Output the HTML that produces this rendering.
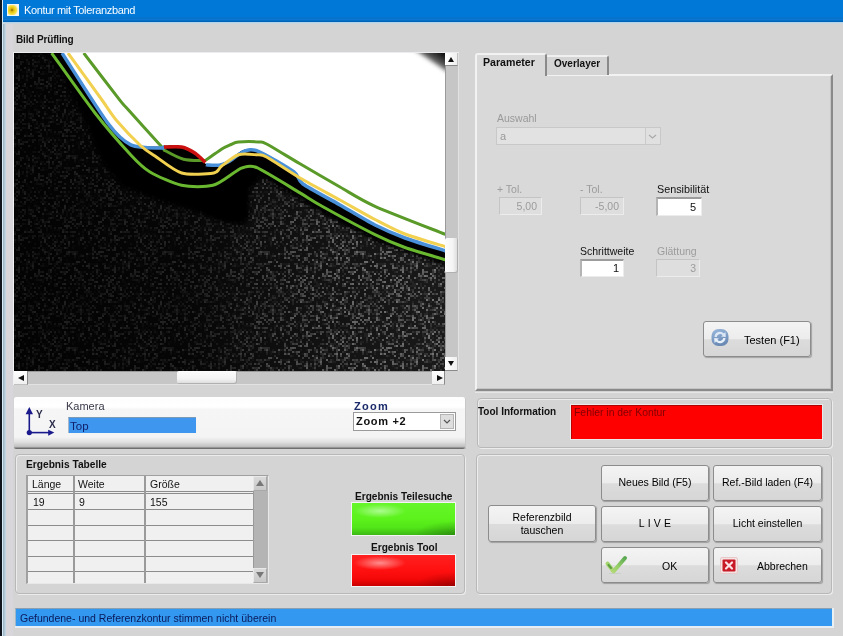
<!DOCTYPE html>
<html><head><meta charset="utf-8">
<style>
*{margin:0;padding:0;box-sizing:border-box;-webkit-font-smoothing:antialiased}
html,body{width:843px;height:636px;overflow:hidden;}body{will-change:transform;background:#d4d4d4;font-family:"Liberation Sans",sans-serif;color:#000}
.a{position:absolute}
.t{position:absolute;white-space:nowrap;line-height:1}
.btn{position:absolute;border:1px solid #8c8c8c;border-radius:3px;background:linear-gradient(#f4f4f4 0%,#ececec 50%,#dcdcdc 52%,#d6d6d6 100%);box-shadow:1px 1px 1px rgba(0,0,0,.25)}
.btn span{position:absolute;white-space:nowrap;line-height:1;font-size:10.5px}
.fld{position:absolute;border:1px solid;border-color:#a8a8a8 #f4f4f4 #f4f4f4 #a8a8a8;background:#e2e2e2}
.grp{position:absolute;border:1px solid #b8b8b8;border-radius:4px;box-shadow:inset 1px 1px 0 #ececec,1px 1px 0 #ececec}
</style></head><body>
<!-- window frame -->
<div class="a" style="left:0;top:0;width:2px;height:636px;background:#10141c"></div>
<div class="a" style="left:2px;top:0;width:1px;height:636px;background:#d8ecf8"></div>
<div class="a" style="left:3px;top:0;width:3px;height:636px;background:linear-gradient(90deg,#9ab0c0,#c8dce8)"></div>
<div class="a" style="left:6px;top:23px;width:7px;height:613px;background:#d8d6da"></div>
<!-- title bar -->
<div class="a" style="left:3px;top:0;width:840px;height:22px;background:linear-gradient(#0078d7 0,#0078d7 17px,#0a6fc4 18px,#0a7ad6 20px,#0062b4 21px,#0062b4 22px)"></div>
<div class="a" style="left:3px;top:22px;width:840px;height:1px;background:#b4d4ee"></div>
<div class="a" style="left:3px;top:23px;width:840px;height:1px;background:#cad6de"></div>
<div class="a" style="left:7px;top:4px;width:12px;height:12px;background:#f4f6f0"></div>
<div class="a" style="left:8px;top:5px;width:10px;height:10px;background:radial-gradient(ellipse 6px 6px at 4px 5px,#806000 0,#d8b010 25%,#f0d820 55%,#f4e060 80%,rgba(250,240,200,0) 100%)"></div>
<div class="t" style="left:24px;top:5px;font-size:11px;letter-spacing:-0.35px;color:#fafdff">Kontur mit Toleranzband</div>

<div class="t" style="left:16px;top:35px;font-size:10px;font-weight:bold;letter-spacing:-0.15px;color:#111">Bild Prüfling</div>

<!-- IMAGE -->
<div class="a" style="left:13px;top:52px;width:1px;height:333px;background:#f2f2f6"></div>
<div class="a" style="left:13px;top:52px;width:446px;height:1px;background:#ececf0"></div>
<div id="img" class="a" style="left:14px;top:53px;width:431px;height:318px;overflow:hidden;background:#fff"><svg width="431" height="318" viewBox="0 0 431 318" style="position:absolute;left:0;top:0">
<defs>
<linearGradient id="dg" x1="0" y1="0" x2="1" y2="0"><stop offset="0" stop-color="#030303"/><stop offset="0.4" stop-color="#060606"/><stop offset="0.65" stop-color="#101010"/><stop offset="1" stop-color="#1a1a1a"/></linearGradient>
<linearGradient id="tr" x1="1" y1="0" x2="0" y2="1"><stop offset="0" stop-color="#000"/><stop offset="0.3" stop-color="#111"/><stop offset="0.55" stop-color="#777"/><stop offset="0.75" stop-color="#fff" stop-opacity="0"/></linearGradient>
<filter id="bl" x="-20%" y="-20%" width="140%" height="140%"><feGaussianBlur stdDeviation="5"/></filter>
<clipPath id="dc"><path d="M-1,-1 L46,-1 L48,0 L47.0,-1.0 C53.1,8.3 83.5,56.7 92.7,69.0 C101.9,81.3 109.2,87.8 116.3,91.1 C123.4,94.4 141.6,93.7 146.0,94.0 C150.4,94.3 146.3,93.1 149.0,93.0 C151.7,92.9 162.5,92.2 166.6,93.0 C170.7,93.8 176.6,96.9 179.8,99.0 C183.0,101.1 188.8,107.0 190.3,108.5 C191.8,110.0 190.6,110.2 191.0,110.5 C191.4,110.8 191.1,110.9 193.0,111.0 C194.9,111.1 202.7,111.5 205.5,111.0 C208.3,110.5 210.9,109.4 214.0,107.6 C217.1,105.8 225.1,98.7 229.0,97.3 C232.9,95.9 236.7,94.5 243.4,97.3 C250.1,100.1 273.1,113.6 279.0,118.0 C284.9,122.4 281.9,125.6 288.0,130.0 C294.1,134.4 315.4,145.4 325.0,150.9 C334.6,156.4 351.3,166.6 360.0,171.0 C368.7,175.4 380.5,180.5 390.0,184.0 C399.5,187.5 425.5,195.3 431.0,197.0 L432,319 L-1,319 Z"/></clipPath>
<pattern id="nz" width="96" height="96" patternUnits="userSpaceOnUse"><path d="M8 0h2v2h-2zM32 0h2v2h-2zM36 0h2v2h-2zM58 0h2v2h-2zM60 0h2v2h-2zM64 0h2v2h-2zM78 0h2v2h-2zM90 0h2v2h-2zM92 0h2v2h-2zM22 2h2v2h-2zM30 2h2v2h-2zM32 2h2v2h-2zM48 2h2v2h-2zM84 2h2v2h-2zM16 4h2v2h-2zM26 4h2v2h-2zM34 4h2v2h-2zM54 4h2v2h-2zM80 4h2v2h-2zM20 6h2v2h-2zM24 6h2v2h-2zM28 6h2v2h-2zM44 6h2v2h-2zM4 8h2v2h-2zM66 8h2v2h-2zM76 8h2v2h-2zM94 8h2v2h-2zM12 10h2v2h-2zM22 10h2v2h-2zM24 10h2v2h-2zM42 10h2v2h-2zM48 10h2v2h-2zM54 10h2v2h-2zM64 10h2v2h-2zM72 10h2v2h-2zM82 10h2v2h-2zM0 12h2v2h-2zM64 12h2v2h-2zM72 12h2v2h-2zM12 14h2v2h-2zM28 14h2v2h-2zM44 14h2v2h-2zM52 14h2v2h-2zM86 14h2v2h-2zM22 16h2v2h-2zM66 16h2v2h-2zM8 18h2v2h-2zM10 18h2v2h-2zM30 18h2v2h-2zM38 18h2v2h-2zM46 18h2v2h-2zM56 18h2v2h-2zM76 18h2v2h-2zM78 18h2v2h-2zM80 18h2v2h-2zM94 18h2v2h-2zM30 20h2v2h-2zM32 20h2v2h-2zM44 20h2v2h-2zM94 20h2v2h-2zM2 22h2v2h-2zM62 22h2v2h-2zM0 24h2v2h-2zM6 24h2v2h-2zM18 24h2v2h-2zM44 24h2v2h-2zM80 24h2v2h-2zM90 24h2v2h-2zM10 26h2v2h-2zM40 26h2v2h-2zM60 26h2v2h-2zM68 26h2v2h-2zM74 26h2v2h-2zM84 26h2v2h-2zM92 26h2v2h-2zM4 28h2v2h-2zM6 28h2v2h-2zM12 28h2v2h-2zM22 28h2v2h-2zM18 32h2v2h-2zM34 32h2v2h-2zM68 32h2v2h-2zM90 32h2v2h-2zM20 34h2v2h-2zM36 34h2v2h-2zM52 34h2v2h-2zM90 34h2v2h-2zM12 36h2v2h-2zM14 36h2v2h-2zM26 36h2v2h-2zM46 36h2v2h-2zM54 36h2v2h-2zM56 36h2v2h-2zM74 36h2v2h-2zM14 38h2v2h-2zM16 38h2v2h-2zM22 38h2v2h-2zM62 38h2v2h-2zM2 40h2v2h-2zM12 40h2v2h-2zM14 40h2v2h-2zM16 40h2v2h-2zM22 40h2v2h-2zM34 40h2v2h-2zM64 40h2v2h-2zM58 42h2v2h-2zM60 42h2v2h-2zM66 42h2v2h-2zM68 42h2v2h-2zM76 42h2v2h-2zM86 42h2v2h-2zM8 44h2v2h-2zM12 44h2v2h-2zM24 44h2v2h-2zM50 44h2v2h-2zM52 44h2v2h-2zM56 44h2v2h-2zM70 44h2v2h-2zM82 44h2v2h-2zM84 44h2v2h-2zM88 44h2v2h-2zM6 46h2v2h-2zM18 46h2v2h-2zM26 46h2v2h-2zM30 46h2v2h-2zM80 46h2v2h-2zM86 46h2v2h-2zM90 46h2v2h-2zM24 48h2v2h-2zM44 48h2v2h-2zM50 48h2v2h-2zM74 48h2v2h-2zM82 48h2v2h-2zM16 50h2v2h-2zM20 50h2v2h-2zM54 50h2v2h-2zM68 50h2v2h-2zM22 52h2v2h-2zM32 52h2v2h-2zM64 52h2v2h-2zM70 52h2v2h-2zM90 52h2v2h-2zM20 54h2v2h-2zM50 54h2v2h-2zM68 54h2v2h-2zM74 54h2v2h-2zM84 54h2v2h-2zM8 56h2v2h-2zM14 56h2v2h-2zM24 56h2v2h-2zM32 56h2v2h-2zM54 56h2v2h-2zM66 56h2v2h-2zM68 56h2v2h-2zM74 56h2v2h-2zM26 58h2v2h-2zM42 58h2v2h-2zM46 58h2v2h-2zM54 58h2v2h-2zM64 58h2v2h-2zM2 60h2v2h-2zM24 60h2v2h-2zM56 60h2v2h-2zM72 60h2v2h-2zM80 60h2v2h-2zM4 62h2v2h-2zM14 62h2v2h-2zM28 62h2v2h-2zM30 62h2v2h-2zM34 62h2v2h-2zM54 62h2v2h-2zM64 62h2v2h-2zM74 62h2v2h-2zM6 64h2v2h-2zM8 64h2v2h-2zM18 64h2v2h-2zM30 64h2v2h-2zM38 64h2v2h-2zM40 64h2v2h-2zM42 64h2v2h-2zM46 64h2v2h-2zM76 64h2v2h-2zM88 64h2v2h-2zM94 64h2v2h-2zM6 66h2v2h-2zM16 66h2v2h-2zM28 66h2v2h-2zM72 66h2v2h-2zM14 68h2v2h-2zM26 68h2v2h-2zM28 68h2v2h-2zM40 68h2v2h-2zM54 68h2v2h-2zM60 68h2v2h-2zM72 68h2v2h-2zM86 68h2v2h-2zM4 70h2v2h-2zM20 70h2v2h-2zM32 70h2v2h-2zM56 70h2v2h-2zM66 70h2v2h-2zM78 70h2v2h-2zM94 70h2v2h-2zM4 72h2v2h-2zM20 72h2v2h-2zM48 72h2v2h-2zM60 72h2v2h-2zM70 72h2v2h-2zM72 72h2v2h-2zM12 74h2v2h-2zM28 74h2v2h-2zM78 74h2v2h-2zM88 74h2v2h-2zM2 76h2v2h-2zM82 76h2v2h-2zM92 76h2v2h-2zM12 78h2v2h-2zM20 78h2v2h-2zM26 78h2v2h-2zM70 78h2v2h-2zM10 80h2v2h-2zM12 80h2v2h-2zM38 80h2v2h-2zM40 80h2v2h-2zM42 80h2v2h-2zM68 80h2v2h-2zM74 80h2v2h-2zM90 80h2v2h-2zM32 82h2v2h-2zM36 82h2v2h-2zM54 82h2v2h-2zM64 82h2v2h-2zM72 82h2v2h-2zM76 82h2v2h-2zM90 82h2v2h-2zM94 82h2v2h-2zM8 84h2v2h-2zM26 84h2v2h-2zM30 84h2v2h-2zM32 84h2v2h-2zM42 84h2v2h-2zM44 84h2v2h-2zM58 84h2v2h-2zM68 84h2v2h-2zM16 86h2v2h-2zM46 86h2v2h-2zM52 86h2v2h-2zM60 86h2v2h-2zM74 86h2v2h-2zM94 86h2v2h-2zM0 88h2v2h-2zM24 88h2v2h-2zM32 88h2v2h-2zM46 88h2v2h-2zM54 88h2v2h-2zM62 88h2v2h-2zM64 88h2v2h-2zM74 88h2v2h-2zM80 88h2v2h-2zM24 90h2v2h-2zM26 90h2v2h-2zM32 90h2v2h-2zM50 90h2v2h-2zM58 90h2v2h-2zM62 90h2v2h-2zM64 90h2v2h-2zM68 90h2v2h-2zM84 90h2v2h-2zM88 90h2v2h-2zM16 92h2v2h-2zM28 92h2v2h-2zM34 92h2v2h-2zM52 92h2v2h-2zM88 92h2v2h-2zM92 92h2v2h-2zM70 94h2v2h-2zM76 94h2v2h-2zM86 94h2v2h-2z" fill="#fff" fill-opacity="0.056"/>
<path d="M4 0h2v2h-2zM72 0h2v2h-2zM86 0h2v2h-2zM0 2h2v2h-2zM18 2h2v2h-2zM28 2h2v2h-2zM42 2h2v2h-2zM46 2h2v2h-2zM58 2h2v2h-2zM30 4h2v2h-2zM36 4h2v2h-2zM34 6h2v2h-2zM78 6h2v2h-2zM12 8h2v2h-2zM18 8h2v2h-2zM44 8h2v2h-2zM62 8h2v2h-2zM74 8h2v2h-2zM40 10h2v2h-2zM78 10h2v2h-2zM88 10h2v2h-2zM18 12h2v2h-2zM26 12h2v2h-2zM28 12h2v2h-2zM60 12h2v2h-2zM14 14h2v2h-2zM20 14h2v2h-2zM84 14h2v2h-2zM12 16h2v2h-2zM20 16h2v2h-2zM46 16h2v2h-2zM14 18h2v2h-2zM16 18h2v2h-2zM28 18h2v2h-2zM40 18h2v2h-2zM60 18h2v2h-2zM62 18h2v2h-2zM82 18h2v2h-2zM0 20h2v2h-2zM12 20h2v2h-2zM26 20h2v2h-2zM52 20h2v2h-2zM54 20h2v2h-2zM56 20h2v2h-2zM14 22h2v2h-2zM50 22h2v2h-2zM8 24h2v2h-2zM12 24h2v2h-2zM40 24h2v2h-2zM34 26h2v2h-2zM62 26h2v2h-2zM66 26h2v2h-2zM94 26h2v2h-2zM34 28h2v2h-2zM42 28h2v2h-2zM48 28h2v2h-2zM60 28h2v2h-2zM0 30h2v2h-2zM24 30h2v2h-2zM40 30h2v2h-2zM22 32h2v2h-2zM12 34h2v2h-2zM22 34h2v2h-2zM28 34h2v2h-2zM66 34h2v2h-2zM28 36h2v2h-2zM36 36h2v2h-2zM62 36h2v2h-2zM88 36h2v2h-2zM92 38h2v2h-2zM26 40h2v2h-2zM68 40h2v2h-2zM88 40h2v2h-2zM48 42h2v2h-2zM14 44h2v2h-2zM36 44h2v2h-2zM94 44h2v2h-2zM46 46h2v2h-2zM72 46h2v2h-2zM76 46h2v2h-2zM26 48h2v2h-2zM28 48h2v2h-2zM36 48h2v2h-2zM42 48h2v2h-2zM72 48h2v2h-2zM76 48h2v2h-2zM42 50h2v2h-2zM66 50h2v2h-2zM16 52h2v2h-2zM28 52h2v2h-2zM80 52h2v2h-2zM8 54h2v2h-2zM30 54h2v2h-2zM44 54h2v2h-2zM64 54h2v2h-2zM92 54h2v2h-2zM2 56h2v2h-2zM6 56h2v2h-2zM22 56h2v2h-2zM36 56h2v2h-2zM42 56h2v2h-2zM70 56h2v2h-2zM86 56h2v2h-2zM14 58h2v2h-2zM86 58h2v2h-2zM4 60h2v2h-2zM32 60h2v2h-2zM60 60h2v2h-2zM70 60h2v2h-2zM16 62h2v2h-2zM36 62h2v2h-2zM52 62h2v2h-2zM92 62h2v2h-2zM14 64h2v2h-2zM32 64h2v2h-2zM44 64h2v2h-2zM48 64h2v2h-2zM52 64h2v2h-2zM68 64h2v2h-2zM38 66h2v2h-2zM52 66h2v2h-2zM56 66h2v2h-2zM64 66h2v2h-2zM68 66h2v2h-2zM74 66h2v2h-2zM84 66h2v2h-2zM90 66h2v2h-2zM2 68h2v2h-2zM18 68h2v2h-2zM48 68h2v2h-2zM70 68h2v2h-2zM12 70h2v2h-2zM34 70h2v2h-2zM74 70h2v2h-2zM76 72h2v2h-2zM10 74h2v2h-2zM24 74h2v2h-2zM48 74h2v2h-2zM52 74h2v2h-2zM0 76h2v2h-2zM36 76h2v2h-2zM64 76h2v2h-2zM4 78h2v2h-2zM22 78h2v2h-2zM32 78h2v2h-2zM36 78h2v2h-2zM82 78h2v2h-2zM90 78h2v2h-2zM32 80h2v2h-2zM44 80h2v2h-2zM50 80h2v2h-2zM68 82h2v2h-2zM34 84h2v2h-2zM38 84h2v2h-2zM94 84h2v2h-2zM14 86h2v2h-2zM34 86h2v2h-2zM68 86h2v2h-2zM40 88h2v2h-2zM52 88h2v2h-2zM2 90h2v2h-2zM42 90h2v2h-2zM52 90h2v2h-2zM4 92h2v2h-2zM64 92h2v2h-2zM20 94h2v2h-2zM26 94h2v2h-2zM46 94h2v2h-2zM64 94h2v2h-2zM94 94h2v2h-2z" fill="#fff" fill-opacity="0.113"/>
<path d="M84 0h2v2h-2zM10 2h2v2h-2zM20 2h2v2h-2zM70 2h2v2h-2zM42 4h2v2h-2zM46 4h2v2h-2zM42 6h2v2h-2zM46 6h2v2h-2zM62 6h2v2h-2zM14 8h2v2h-2zM22 8h2v2h-2zM24 8h2v2h-2zM30 8h2v2h-2zM34 8h2v2h-2zM34 10h2v2h-2zM50 10h2v2h-2zM60 10h2v2h-2zM66 10h2v2h-2zM20 12h2v2h-2zM80 12h2v2h-2zM90 12h2v2h-2zM30 14h2v2h-2zM68 14h2v2h-2zM34 16h2v2h-2zM12 18h2v2h-2zM52 18h2v2h-2zM88 18h2v2h-2zM90 18h2v2h-2zM4 20h2v2h-2zM16 20h2v2h-2zM28 20h2v2h-2zM40 20h2v2h-2zM42 22h2v2h-2zM16 24h2v2h-2zM34 24h2v2h-2zM84 24h2v2h-2zM70 26h2v2h-2zM78 26h2v2h-2zM64 28h2v2h-2zM66 28h2v2h-2zM82 28h2v2h-2zM36 30h2v2h-2zM92 30h2v2h-2zM8 32h2v2h-2zM30 32h2v2h-2zM60 32h2v2h-2zM62 32h2v2h-2zM66 32h2v2h-2zM76 32h2v2h-2zM82 32h2v2h-2zM24 34h2v2h-2zM40 34h2v2h-2zM6 36h2v2h-2zM44 36h2v2h-2zM40 38h2v2h-2zM68 38h2v2h-2zM4 40h2v2h-2zM40 40h2v2h-2zM42 40h2v2h-2zM70 40h2v2h-2zM8 42h2v2h-2zM16 42h2v2h-2zM54 42h2v2h-2zM80 42h2v2h-2zM90 42h2v2h-2zM0 44h2v2h-2zM74 44h2v2h-2zM14 46h2v2h-2zM44 46h2v2h-2zM52 46h2v2h-2zM56 46h2v2h-2zM70 46h2v2h-2zM84 46h2v2h-2zM8 48h2v2h-2zM12 48h2v2h-2zM78 48h2v2h-2zM28 50h2v2h-2zM62 50h2v2h-2zM84 50h2v2h-2zM94 50h2v2h-2zM26 52h2v2h-2zM30 52h2v2h-2zM66 52h2v2h-2zM68 52h2v2h-2zM82 52h2v2h-2zM88 52h2v2h-2zM42 54h2v2h-2zM62 54h2v2h-2zM78 54h2v2h-2zM86 54h2v2h-2zM0 56h2v2h-2zM20 56h2v2h-2zM44 56h2v2h-2zM58 56h2v2h-2zM90 56h2v2h-2zM22 58h2v2h-2zM30 58h2v2h-2zM38 58h2v2h-2zM18 60h2v2h-2zM42 60h2v2h-2zM50 60h2v2h-2zM58 60h2v2h-2zM64 60h2v2h-2zM74 60h2v2h-2zM66 62h2v2h-2zM94 62h2v2h-2zM10 64h2v2h-2zM34 64h2v2h-2zM56 64h2v2h-2zM64 64h2v2h-2zM74 64h2v2h-2zM62 66h2v2h-2zM22 68h2v2h-2zM34 68h2v2h-2zM38 68h2v2h-2zM22 70h2v2h-2zM26 70h2v2h-2zM42 70h2v2h-2zM44 70h2v2h-2zM52 70h2v2h-2zM0 72h2v2h-2zM24 72h2v2h-2zM30 72h2v2h-2zM8 74h2v2h-2zM20 74h2v2h-2zM30 74h2v2h-2zM2 78h2v2h-2zM94 78h2v2h-2zM76 80h2v2h-2zM0 82h2v2h-2zM12 82h2v2h-2zM50 82h2v2h-2zM78 84h2v2h-2zM6 86h2v2h-2zM24 86h2v2h-2zM26 86h2v2h-2zM28 86h2v2h-2zM32 86h2v2h-2zM44 86h2v2h-2zM56 86h2v2h-2zM80 86h2v2h-2zM30 88h2v2h-2zM38 90h2v2h-2zM76 90h2v2h-2zM0 92h2v2h-2zM74 92h2v2h-2zM40 94h2v2h-2zM90 94h2v2h-2z" fill="#fff" fill-opacity="0.169"/>
<path d="M26 0h2v2h-2zM44 0h2v2h-2zM54 0h2v2h-2zM36 2h2v2h-2zM52 2h2v2h-2zM88 2h2v2h-2zM92 4h2v2h-2zM12 6h2v2h-2zM32 6h2v2h-2zM52 6h2v2h-2zM56 6h2v2h-2zM58 6h2v2h-2zM60 6h2v2h-2zM8 8h2v2h-2zM54 8h2v2h-2zM58 8h2v2h-2zM84 8h2v2h-2zM4 12h2v2h-2zM46 12h2v2h-2zM4 14h2v2h-2zM34 14h2v2h-2zM38 14h2v2h-2zM0 16h2v2h-2zM6 16h2v2h-2zM18 16h2v2h-2zM42 16h2v2h-2zM34 18h2v2h-2zM42 18h2v2h-2zM50 18h2v2h-2zM54 18h2v2h-2zM74 18h2v2h-2zM80 20h2v2h-2zM8 22h2v2h-2zM38 22h2v2h-2zM44 22h2v2h-2zM74 22h2v2h-2zM94 22h2v2h-2zM12 26h2v2h-2zM26 26h2v2h-2zM48 26h2v2h-2zM50 26h2v2h-2zM76 28h2v2h-2zM66 30h2v2h-2zM68 30h2v2h-2zM90 30h2v2h-2zM64 32h2v2h-2zM26 34h2v2h-2zM32 34h2v2h-2zM64 34h2v2h-2zM74 34h2v2h-2zM76 34h2v2h-2zM2 38h2v2h-2zM64 38h2v2h-2zM74 38h2v2h-2zM76 38h2v2h-2zM8 40h2v2h-2zM84 40h2v2h-2zM90 40h2v2h-2zM24 42h2v2h-2zM4 44h2v2h-2zM32 46h2v2h-2zM50 46h2v2h-2zM74 46h2v2h-2zM34 48h2v2h-2zM38 48h2v2h-2zM86 48h2v2h-2zM88 48h2v2h-2zM12 50h2v2h-2zM14 50h2v2h-2zM18 50h2v2h-2zM52 50h2v2h-2zM72 50h2v2h-2zM76 50h2v2h-2zM6 52h2v2h-2zM78 52h2v2h-2zM10 54h2v2h-2zM4 56h2v2h-2zM76 56h2v2h-2zM40 58h2v2h-2zM56 58h2v2h-2zM58 58h2v2h-2zM68 58h2v2h-2zM72 58h2v2h-2zM10 60h2v2h-2zM14 60h2v2h-2zM22 60h2v2h-2zM66 60h2v2h-2zM6 62h2v2h-2zM10 62h2v2h-2zM18 62h2v2h-2zM58 62h2v2h-2zM76 62h2v2h-2zM80 62h2v2h-2zM72 64h2v2h-2zM4 66h2v2h-2zM66 66h2v2h-2zM92 66h2v2h-2zM6 68h2v2h-2zM50 68h2v2h-2zM58 68h2v2h-2zM76 68h2v2h-2zM88 68h2v2h-2zM94 68h2v2h-2zM0 70h2v2h-2zM8 70h2v2h-2zM10 70h2v2h-2zM50 70h2v2h-2zM32 72h2v2h-2zM4 74h2v2h-2zM76 74h2v2h-2zM84 74h2v2h-2zM16 76h2v2h-2zM72 76h2v2h-2zM80 76h2v2h-2zM24 78h2v2h-2zM40 78h2v2h-2zM44 78h2v2h-2zM62 78h2v2h-2zM84 78h2v2h-2zM26 80h2v2h-2zM70 80h2v2h-2zM80 80h2v2h-2zM88 80h2v2h-2zM16 82h2v2h-2zM18 82h2v2h-2zM56 82h2v2h-2zM28 84h2v2h-2zM64 84h2v2h-2zM18 86h2v2h-2zM20 86h2v2h-2zM82 86h2v2h-2zM8 88h2v2h-2zM10 88h2v2h-2zM82 88h2v2h-2zM90 88h2v2h-2zM4 90h2v2h-2zM48 90h2v2h-2zM86 90h2v2h-2zM90 90h2v2h-2zM42 92h2v2h-2zM48 92h2v2h-2zM6 94h2v2h-2zM32 94h2v2h-2zM38 94h2v2h-2z" fill="#fff" fill-opacity="0.225"/>
<path d="M94 0h2v2h-2zM24 2h2v2h-2zM78 2h2v2h-2zM86 2h2v2h-2zM90 2h2v2h-2zM2 4h2v2h-2zM40 4h2v2h-2zM44 4h2v2h-2zM78 4h2v2h-2zM6 8h2v2h-2zM20 8h2v2h-2zM52 8h2v2h-2zM82 8h2v2h-2zM6 10h2v2h-2zM14 10h2v2h-2zM68 10h2v2h-2zM90 10h2v2h-2zM22 12h2v2h-2zM32 12h2v2h-2zM2 14h2v2h-2zM44 16h2v2h-2zM18 18h2v2h-2zM36 18h2v2h-2zM58 18h2v2h-2zM68 20h2v2h-2zM12 22h2v2h-2zM18 22h2v2h-2zM52 22h2v2h-2zM92 22h2v2h-2zM2 24h2v2h-2zM54 24h2v2h-2zM60 24h2v2h-2zM82 24h2v2h-2zM28 26h2v2h-2zM36 26h2v2h-2zM24 28h2v2h-2zM20 30h2v2h-2zM22 30h2v2h-2zM84 30h2v2h-2zM10 32h2v2h-2zM0 34h2v2h-2zM50 34h2v2h-2zM0 36h2v2h-2zM80 36h2v2h-2zM94 36h2v2h-2zM6 38h2v2h-2zM18 38h2v2h-2zM60 38h2v2h-2zM94 38h2v2h-2zM20 42h2v2h-2zM50 42h2v2h-2zM64 42h2v2h-2zM70 42h2v2h-2zM30 44h2v2h-2zM72 44h2v2h-2zM2 46h2v2h-2zM42 46h2v2h-2zM0 48h2v2h-2zM16 48h2v2h-2zM22 48h2v2h-2zM54 48h2v2h-2zM90 48h2v2h-2zM94 48h2v2h-2zM40 52h2v2h-2zM44 52h2v2h-2zM52 52h2v2h-2zM58 52h2v2h-2zM0 54h2v2h-2zM80 54h2v2h-2zM94 54h2v2h-2zM16 60h2v2h-2zM48 60h2v2h-2zM54 60h2v2h-2zM62 60h2v2h-2zM78 60h2v2h-2zM48 62h2v2h-2zM16 64h2v2h-2zM36 64h2v2h-2zM46 66h2v2h-2zM66 68h2v2h-2zM74 68h2v2h-2zM90 68h2v2h-2zM2 70h2v2h-2zM14 70h2v2h-2zM58 70h2v2h-2zM60 70h2v2h-2zM16 72h2v2h-2zM50 72h2v2h-2zM56 72h2v2h-2zM0 74h2v2h-2zM2 74h2v2h-2zM64 74h2v2h-2zM66 74h2v2h-2zM6 76h2v2h-2zM26 76h2v2h-2zM34 76h2v2h-2zM60 76h2v2h-2zM88 76h2v2h-2zM46 78h2v2h-2zM52 78h2v2h-2zM56 78h2v2h-2zM86 78h2v2h-2zM2 80h2v2h-2zM48 80h2v2h-2zM14 82h2v2h-2zM58 82h2v2h-2zM60 82h2v2h-2zM84 84h2v2h-2zM40 86h2v2h-2zM58 86h2v2h-2zM18 88h2v2h-2zM66 88h2v2h-2zM0 90h2v2h-2zM8 90h2v2h-2zM14 92h2v2h-2zM26 92h2v2h-2zM46 92h2v2h-2zM70 92h2v2h-2zM68 94h2v2h-2zM80 94h2v2h-2z" fill="#fff" fill-opacity="0.281"/>
<path d="M34 0h2v2h-2zM38 2h2v2h-2zM4 4h2v2h-2zM28 4h2v2h-2zM18 6h2v2h-2zM80 6h2v2h-2zM84 6h2v2h-2zM88 6h2v2h-2zM42 8h2v2h-2zM78 8h2v2h-2zM18 10h2v2h-2zM86 10h2v2h-2zM92 10h2v2h-2zM2 12h2v2h-2zM38 12h2v2h-2zM10 14h2v2h-2zM26 14h2v2h-2zM46 14h2v2h-2zM92 14h2v2h-2zM74 20h2v2h-2zM90 20h2v2h-2zM4 22h2v2h-2zM48 22h2v2h-2zM78 22h2v2h-2zM90 22h2v2h-2zM4 24h2v2h-2zM24 24h2v2h-2zM24 26h2v2h-2zM46 26h2v2h-2zM64 26h2v2h-2zM82 26h2v2h-2zM20 28h2v2h-2zM50 28h2v2h-2zM86 28h2v2h-2zM2 30h2v2h-2zM28 30h2v2h-2zM34 30h2v2h-2zM56 30h2v2h-2zM78 30h2v2h-2zM4 32h2v2h-2zM16 32h2v2h-2zM32 32h2v2h-2zM36 32h2v2h-2zM44 32h2v2h-2zM46 32h2v2h-2zM56 32h2v2h-2zM78 34h2v2h-2zM92 34h2v2h-2zM8 36h2v2h-2zM70 36h2v2h-2zM34 38h2v2h-2zM48 38h2v2h-2zM56 38h2v2h-2zM80 40h2v2h-2zM2 42h2v2h-2zM4 42h2v2h-2zM10 42h2v2h-2zM30 42h2v2h-2zM46 42h2v2h-2zM62 44h2v2h-2zM92 44h2v2h-2zM20 46h2v2h-2zM10 48h2v2h-2zM62 48h2v2h-2zM0 50h2v2h-2zM2 50h2v2h-2zM10 52h2v2h-2zM38 56h2v2h-2zM60 56h2v2h-2zM82 56h2v2h-2zM24 58h2v2h-2zM8 60h2v2h-2zM30 60h2v2h-2zM38 62h2v2h-2zM28 64h2v2h-2zM66 64h2v2h-2zM90 64h2v2h-2zM8 66h2v2h-2zM18 66h2v2h-2zM78 66h2v2h-2zM36 68h2v2h-2zM28 70h2v2h-2zM28 72h2v2h-2zM54 72h2v2h-2zM74 72h2v2h-2zM22 74h2v2h-2zM58 74h2v2h-2zM62 74h2v2h-2zM74 74h2v2h-2zM54 76h2v2h-2zM4 80h2v2h-2zM82 80h2v2h-2zM94 80h2v2h-2zM24 82h2v2h-2zM26 82h2v2h-2zM52 82h2v2h-2zM74 82h2v2h-2zM84 82h2v2h-2zM0 84h2v2h-2zM36 86h2v2h-2zM4 88h2v2h-2zM12 88h2v2h-2zM28 88h2v2h-2zM50 88h2v2h-2zM40 92h2v2h-2zM58 92h2v2h-2zM50 94h2v2h-2zM54 94h2v2h-2z" fill="#fff" fill-opacity="0.338"/>
<path d="M40 0h2v2h-2zM4 2h2v2h-2zM50 2h2v2h-2zM94 4h2v2h-2zM30 6h2v2h-2zM54 6h2v2h-2zM86 6h2v2h-2zM36 8h2v2h-2zM60 8h2v2h-2zM72 8h2v2h-2zM34 12h2v2h-2zM44 12h2v2h-2zM78 12h2v2h-2zM82 12h2v2h-2zM14 16h2v2h-2zM62 16h2v2h-2zM64 16h2v2h-2zM70 16h2v2h-2zM24 18h2v2h-2zM18 20h2v2h-2zM72 20h2v2h-2zM82 20h2v2h-2zM60 22h2v2h-2zM36 24h2v2h-2zM62 24h2v2h-2zM4 26h2v2h-2zM52 26h2v2h-2zM32 28h2v2h-2zM72 28h2v2h-2zM10 30h2v2h-2zM26 30h2v2h-2zM60 30h2v2h-2zM94 32h2v2h-2zM2 34h2v2h-2zM58 34h2v2h-2zM68 34h2v2h-2zM88 34h2v2h-2zM82 36h2v2h-2zM42 38h2v2h-2zM50 38h2v2h-2zM86 40h2v2h-2zM94 40h2v2h-2zM74 42h2v2h-2zM84 42h2v2h-2zM10 44h2v2h-2zM92 46h2v2h-2zM30 48h2v2h-2zM48 50h2v2h-2zM86 50h2v2h-2zM28 54h2v2h-2zM34 54h2v2h-2zM40 54h2v2h-2zM50 56h2v2h-2zM94 56h2v2h-2zM50 58h2v2h-2zM24 62h2v2h-2zM42 62h2v2h-2zM90 62h2v2h-2zM20 66h2v2h-2zM42 66h2v2h-2zM82 66h2v2h-2zM46 68h2v2h-2zM56 68h2v2h-2zM88 70h2v2h-2zM14 72h2v2h-2zM34 72h2v2h-2zM66 72h2v2h-2zM84 72h2v2h-2zM86 72h2v2h-2zM14 74h2v2h-2zM30 76h2v2h-2zM50 76h2v2h-2zM52 76h2v2h-2zM68 76h2v2h-2zM16 80h2v2h-2zM10 82h2v2h-2zM48 82h2v2h-2zM74 84h2v2h-2zM4 86h2v2h-2zM50 86h2v2h-2zM34 88h2v2h-2zM68 88h2v2h-2zM76 88h2v2h-2zM88 88h2v2h-2zM6 90h2v2h-2zM30 90h2v2h-2zM66 90h2v2h-2zM30 92h2v2h-2zM54 92h2v2h-2zM84 92h2v2h-2z" fill="#fff" fill-opacity="0.394"/></pattern>
<linearGradient id="mg" x1="0" y1="0" x2="1" y2="0"><stop offset="0" stop-color="#fff" stop-opacity="0.26"/><stop offset="0.45" stop-color="#fff" stop-opacity="0.33"/><stop offset="0.75" stop-color="#fff" stop-opacity="0.9"/><stop offset="1" stop-color="#fff" stop-opacity="1"/></linearGradient>
<mask id="nm"><rect width="431" height="318" fill="url(#mg)"/></mask>
<filter id="bl3" x="-10%" y="-10%" width="120%" height="120%"><feGaussianBlur stdDeviation="2"/></filter>
<filter id="bl2" x="-20%" y="-20%" width="140%" height="140%"><feGaussianBlur stdDeviation="2"/></filter>
</defs>
<rect width="431" height="318" fill="#fff"/>
<path d="M-1,-1 L46,-1 L48,0 L47.0,-1.0 C53.1,8.3 83.5,56.7 92.7,69.0 C101.9,81.3 109.2,87.8 116.3,91.1 C123.4,94.4 141.6,93.7 146.0,94.0 C150.4,94.3 146.3,93.1 149.0,93.0 C151.7,92.9 162.5,92.2 166.6,93.0 C170.7,93.8 176.6,96.9 179.8,99.0 C183.0,101.1 188.8,107.0 190.3,108.5 C191.8,110.0 190.6,110.2 191.0,110.5 C191.4,110.8 191.1,110.9 193.0,111.0 C194.9,111.1 202.7,111.5 205.5,111.0 C208.3,110.5 210.9,109.4 214.0,107.6 C217.1,105.8 225.1,98.7 229.0,97.3 C232.9,95.9 236.7,94.5 243.4,97.3 C250.1,100.1 273.1,113.6 279.0,118.0 C284.9,122.4 281.9,125.6 288.0,130.0 C294.1,134.4 315.4,145.4 325.0,150.9 C334.6,156.4 351.3,166.6 360.0,171.0 C368.7,175.4 380.5,180.5 390.0,184.0 C399.5,187.5 425.5,195.3 431.0,197.0 L432,319 L-1,319 Z" fill="url(#dg)"/>
<g clip-path="url(#dc)"><rect width="431" height="318" fill="url(#nz)" mask="url(#nm)"/></g>
<g clip-path="url(#dc)"><polygon points="-1.0,-13.0 46.0,-13.0 186.0,47.0 432.0,147.0 432.0,213.0 361.0,188.0 307.6,160.0 286.0,147.0 248.0,124.0 236.0,137.0 236.0,164.0 227.0,173.0 203.0,168.0 181.6,158.3 146.0,148.3 105.8,132.5 86.0,107.0 74.0,75.0 56.0,37.0 32.0,0.0 -1.0,0.0" fill="#000" filter="url(#bl3)"/></g>
<polygon points="394.0,-8.0 442.0,-8.0 442.0,21.0 432.0,18.0" fill="url(#tr)" filter="url(#bl2)"/>
<path d="M69.7,0.0 C74.5,6.3 100.0,39.7 106.0,47.3 C112.0,54.9 108.9,50.7 114.5,57.0 C120.1,63.3 143.2,88.9 148.1,94.3 C153.0,99.7 148.5,96.1 151.4,97.7 C154.3,99.3 164.7,104.9 169.5,106.2 C174.3,107.5 184.5,107.5 187.5,107.6 C190.5,107.7 189.3,108.5 192.0,107.0 C194.7,105.5 204.1,98.3 207.4,96.2 C210.7,94.1 214.6,92.5 216.9,91.5 C219.2,90.5 220.7,89.3 224.4,89.0 C228.1,88.7 241.2,88.7 245.0,89.0 C248.8,89.3 247.1,88.1 252.6,91.0 C258.1,93.9 276.2,105.1 286.0,110.8 C295.8,116.5 316.0,128.3 326.0,134.0 C336.0,139.7 346.9,147.0 361.0,153.3 C375.1,159.6 422.5,177.8 432.0,181.6" fill="none" stroke="#5a9a28" stroke-width="3" stroke-linejoin="round"/>
<path d="M48.0,0.0 C54.1,9.3 84.5,57.7 93.7,70.0 C102.9,82.3 110.2,88.8 117.3,92.1 C124.4,95.4 142.6,94.7 147.0,95.0 C151.4,95.3 149.6,94.1 150.0,94.0" fill="none" stroke="#4a90d8" stroke-width="3.5" stroke-linejoin="round"/>
<path d="M192.0,111.5 C192.3,111.6 192.1,111.9 194.0,112.0 C195.9,112.1 203.7,112.5 206.5,112.0 C209.3,111.5 211.9,110.4 215.0,108.6 C218.1,106.8 226.1,99.7 230.0,98.3 C233.9,96.9 237.7,95.5 244.4,98.3 C251.1,101.1 274.1,114.6 280.0,119.0 C285.9,123.4 282.9,126.6 289.0,131.0 C295.1,135.4 316.4,146.4 326.0,151.9 C335.6,157.4 352.3,167.6 361.0,172.0 C369.7,176.4 381.5,181.5 391.0,185.0 C400.5,188.5 426.5,196.3 432.0,198.0" fill="none" stroke="#4a90d8" stroke-width="3.5" stroke-linejoin="round"/>
<path d="M54.0,0.0 C58.5,6.3 81.5,37.9 88.0,47.0 C94.5,56.1 97.8,61.9 103.0,68.0 C108.2,74.1 121.9,88.3 127.0,93.0 C132.1,97.7 135.6,99.4 141.0,103.0 C146.4,106.6 159.8,117.7 167.6,120.0 C175.4,122.3 194.5,120.9 199.8,120.0 C205.1,119.1 204.1,115.7 207.4,113.3 C210.7,110.9 219.8,103.3 224.4,101.8 C229.0,100.3 238.4,101.5 242.2,101.8 C246.0,102.1 246.8,100.9 252.6,104.0 C258.4,107.1 276.2,119.3 286.0,125.0 C295.8,130.7 316.0,141.5 326.0,147.0 C336.0,152.5 352.3,162.0 361.0,166.5 C369.7,171.0 381.5,177.4 391.0,181.0 C400.5,184.6 426.5,192.1 432.0,193.8" fill="none" stroke="#f2d050" stroke-width="3" stroke-linejoin="round"/>
<path d="M150.0,94.0 C152.3,94.0 163.5,93.2 167.6,94.0 C171.7,94.8 177.6,97.9 180.8,100.0 C184.0,102.1 189.9,108.2 191.3,109.5" fill="none" stroke="#cc1010" stroke-width="3.5" stroke-linejoin="round"/>
<path d="M37.6,0.0 C43.4,8.0 70.4,46.3 81.0,60.0 C91.6,73.7 110.0,94.6 117.3,102.5 C124.6,110.4 129.3,115.0 136.0,119.0 C142.7,123.0 159.2,130.5 167.6,132.3 C176.0,134.1 191.8,134.1 198.9,132.3 C206.0,130.5 217.0,121.3 221.0,119.0 C225.0,116.7 225.8,115.3 228.7,114.7 C231.6,114.1 235.4,111.3 243.0,114.7 C250.6,118.1 277.4,134.8 286.0,139.9 C294.6,145.0 297.6,147.4 307.6,153.0 C317.6,158.6 349.9,176.1 361.0,181.6 C372.1,187.1 381.5,191.1 391.0,194.5 C400.5,197.9 426.5,205.3 432.0,207.0" fill="none" stroke="#6ab830" stroke-width="3" stroke-linejoin="round"/>
</svg></div>


<!-- scrollbars -->
<div class="a" style="left:445px;top:53px;width:13px;height:318px;background:#c6c6c6;border-left:1px solid #9a9a9a"></div>
<div class="a" style="left:458px;top:53px;width:1px;height:318px;background:#e2e2e2"></div>
<div class="a" style="left:445px;top:53px;width:13px;height:13px;background:linear-gradient(90deg,#fff,#f0f0f0);border-right:1px solid #c0c0c0;border-bottom:1px solid #8a8a8a"></div>
<div class="a" style="left:448px;top:57px;width:0;height:0;border-left:3.5px solid transparent;border-right:3.5px solid transparent;border-bottom:5px solid #111"></div>
<div class="a" style="left:445px;top:357px;width:13px;height:14px;background:linear-gradient(90deg,#fff,#f0f0f0);border-right:1px solid #c0c0c0;border-bottom:1px solid #8a8a8a"></div>
<div class="a" style="left:448px;top:361px;width:0;height:0;border-left:3.5px solid transparent;border-right:3.5px solid transparent;border-top:5px solid #111"></div>
<div class="a" style="left:445px;top:238px;width:13px;height:35px;background:linear-gradient(90deg,#fcfcfc 0,#f4f4f4 60%,#d8d8d8 100%);border-radius:2px;box-shadow:inset -1px -1px 0 #b0b0b0"></div>

<div class="a" style="left:14px;top:371px;width:431px;height:13px;background:#c6c6c6;border-top:1px solid #9a9a9a"></div>
<div class="a" style="left:14px;top:384px;width:431px;height:1px;background:#e2e2e2"></div>
<div class="a" style="left:14px;top:371px;width:14px;height:14px;background:linear-gradient(#fff,#f0f0f0);border-right:1px solid #8a8a8a;border-bottom:1px solid #c0c0c0"></div>
<div class="a" style="left:18px;top:374.5px;width:0;height:0;border-top:3.5px solid transparent;border-bottom:3.5px solid transparent;border-right:6px solid #111"></div>
<div class="a" style="left:432px;top:371px;width:13px;height:14px;background:linear-gradient(#fff,#f0f0f0);border-right:1px solid #8a8a8a;border-bottom:1px solid #c0c0c0"></div>
<div class="a" style="left:437px;top:374.5px;width:0;height:0;border-top:3.5px solid transparent;border-bottom:3.5px solid transparent;border-left:6px solid #111"></div>
<div class="a" style="left:177px;top:371px;width:60px;height:13px;background:linear-gradient(#fcfcfc 0,#f4f4f4 60%,#d8d8d8 100%);border-radius:2px;box-shadow:inset -1px -1px 0 #b0b0b0"></div>

<!-- Kamera panel -->
<div class="a" style="left:14px;top:397px;width:452px;height:52px;background:linear-gradient(#fdfdfd 0,#fff 10px,#f6f6f6 12px,#f4f4f4 40px,#e0e0e0 45px,#bcbcbc 50px,#6e6e6e 51px);border-radius:2px;box-shadow:inset -1px 0 0 #c8c8c8"></div>
<svg class="a" style="left:20px;top:403px" width="40" height="36" viewBox="0 0 40 36">
<g fill="#1a1a8c" stroke="#1a1a8c">
<line x1="9.3" y1="29.6" x2="9.3" y2="9" stroke-width="1.6"/>
<line x1="9.3" y1="29.6" x2="29" y2="29.6" stroke-width="1.6"/>
<polygon points="9.3,4 5.6,11.2 13,11.2" stroke="none"/>
<polygon points="34.3,29.6 28.2,26.7 28.2,32.7" stroke="none"/>
<circle cx="9.3" cy="29.6" r="2.6" stroke="none"/>
</g>
<text x="16" y="14.5" font-family="Liberation Sans" font-weight="bold" font-size="10" fill="#2a2a4a">Y</text>
<text x="29" y="24.8" font-family="Liberation Sans" font-weight="bold" font-size="10" fill="#2a2a4a">X</text>
</svg>
<div class="t" style="left:66px;top:401px;font-size:11px;color:#3a3a4a">Kamera</div>
<div class="a" style="left:68px;top:417px;width:128px;height:16px;background:#3e96ee;border-top:1px solid #7a9ab8;border-left:1px solid #a8b8c8"></div>
<div class="t" style="left:70px;top:421px;font-size:11.5px;color:#10206a">Top</div>
<div class="t" style="left:354px;top:401px;font-size:11px;font-weight:bold;letter-spacing:1.3px;color:#1a2a6a">Zoom</div>
<div class="a" style="left:353px;top:412px;width:103px;height:19px;background:#fff;border:1px solid #9a9a9a"></div>
<div class="t" style="left:356px;top:416px;font-size:11px;font-weight:bold;letter-spacing:0.7px;color:#111">Zoom +2</div>
<div class="a" style="left:440px;top:414px;width:14px;height:15px;background:#dedede;border:1px solid #b4b4b4"></div>
<svg class="a" style="left:440px;top:414px" width="14" height="15"><polyline points="4,6 7,9 10,6" fill="none" stroke="#555" stroke-width="1.2"/></svg>

<!-- Tab panel -->
<div class="a" style="left:475px;top:74px;width:358px;height:317px;background:#d9d9d9;border-left:2px solid #f2f2f2;border-top:2px solid #f2f2f2;border-right:2px solid #8a8a8a;border-bottom:2px solid #8a8a8a;box-shadow:inset -1px -1px 0 #c4c4c4"></div>
<div class="a" style="left:546px;top:55px;width:63px;height:20px;background:#d4d4d4;border-left:1px solid #f0f0f0;border-top:2px solid #f0f0f0;border-right:2px solid #8a8a8a;border-radius:2px 3px 0 0"></div>
<div class="a" style="left:475px;top:53px;width:72px;height:23px;background:#d9d9d9;border-left:2px solid #f2f2f2;border-top:2px solid #f2f2f2;border-right:2px solid #8a8a8a;border-radius:3px 3px 0 0"></div>
<div class="t" style="left:483px;top:57px;font-size:10.6px;font-weight:bold;color:#111">Parameter</div>
<div class="t" style="left:554px;top:59px;font-size:10px;font-weight:bold;color:#111">Overlayer</div>

<div class="t" style="left:497px;top:113px;font-size:10.5px;color:#9a9a9a">Auswahl</div>
<div class="a" style="left:496px;top:127px;width:165px;height:18px;background:#e2e2e2;border:1px solid #c8c8c8"></div>
<div class="t" style="left:500px;top:131px;font-size:11px;color:#9a9a9a">a</div>
<div class="a" style="left:645px;top:128px;width:15px;height:16px;background:#e0e0e0;border-left:1px solid #cacaca"></div>
<svg class="a" style="left:645px;top:128px" width="15" height="16"><polyline points="4,7 7.5,10 11,7" fill="none" stroke="#aaa" stroke-width="1.2"/></svg>

<div class="t" style="left:497px;top:184px;font-size:10.5px;color:#9c9c9c">+ Tol.</div>
<div class="fld" style="left:499px;top:197px;width:43px;height:18px;background:#dedede;border-color:#c4c4c4 #ececec #ececec #c4c4c4"></div>
<div class="t" style="left:499px;top:201px;width:38px;text-align:right;font-size:10.5px;color:#9c9c9c">5,00</div>
<div class="t" style="left:580px;top:184px;font-size:10.5px;color:#9c9c9c">- Tol.</div>
<div class="fld" style="left:580px;top:197px;width:44px;height:18px;background:#dedede;border-color:#c4c4c4 #ececec #ececec #c4c4c4"></div>
<div class="t" style="left:580px;top:201px;width:39px;text-align:right;font-size:10.5px;color:#9c9c9c">-5,00</div>
<div class="t" style="left:657px;top:184px;font-size:10.8px;color:#111">Sensibilität</div>
<div class="fld" style="left:656px;top:197px;width:46px;height:19px;background:#fff;border-width:2px 1px 1px 2px;border-color:#9c9c9c #ececec #ececec #b4b4b4"></div>
<div class="t" style="left:656px;top:202px;width:40px;text-align:right;font-size:11px;color:#111">5</div>

<div class="t" style="left:580px;top:246px;font-size:10.5px;color:#111">Schrittweite</div>
<div class="fld" style="left:580px;top:259px;width:44px;height:18px;background:#fff;border-width:2px 1px 1px 2px;border-color:#9c9c9c #ececec #ececec #b4b4b4"></div>
<div class="t" style="left:580px;top:263px;width:39px;text-align:right;font-size:11px;color:#111">1</div>
<div class="t" style="left:657px;top:246px;font-size:10.5px;color:#9c9c9c">Glättung</div>
<div class="fld" style="left:656px;top:259px;width:44px;height:18px;background:#dedede;border-color:#c4c4c4 #ececec #ececec #c4c4c4"></div>
<div class="t" style="left:656px;top:263px;width:40px;text-align:right;font-size:10.5px;color:#9c9c9c">3</div>

<div class="btn" style="left:703px;top:321px;width:108px;height:36px"><span style="left:40px;top:13px;font-size:11px">Testen (F1)</span></div>
<svg class="a" style="left:711px;top:328px" width="18" height="19" viewBox="0 0 18 19">
<defs><linearGradient id="rg" x1="0" y1="0" x2="0.3" y2="1"><stop offset="0" stop-color="#9ab8dc"/><stop offset="1" stop-color="#6a8ab4"/></linearGradient></defs>
<rect x="0.5" y="1" width="17" height="17" rx="7" fill="url(#rg)"/>
<path d="M3.5,9 A5.5,5.5 0 0 1 13,5.5 L14.5,4 L14.8,9 L10,8.6 L11.6,7.2 A3.3,3.3 0 0 0 5.8,9 Z" fill="#dce8f6"/>
<path d="M14.5,10 A5.5,5.5 0 0 1 5,13.5 L3.5,15 L3.2,10 L8,10.4 L6.4,11.8 A3.3,3.3 0 0 0 12.2,10 Z" fill="#e8f0fa"/>
</svg>

<div class="a" style="left:475px;top:392px;width:358px;height:1px;background:#e6e6e6"></div>
<!-- Tool information -->
<div class="grp" style="left:477px;top:398px;width:355px;height:50px"></div>
<div class="t" style="left:478px;top:407px;font-size:10px;font-weight:bold;color:#111">Tool Information</div>
<div class="a" style="left:570px;top:404px;width:253px;height:36px;background:#c8c8c8;border:1px solid #eaeaea"></div>
<div class="a" style="left:571px;top:405px;width:251px;height:34px;background:#ff0000;border-top:1px solid #b00000;border-left:1px solid #c00000"></div>
<div class="t" style="left:574px;top:408px;font-size:10.4px;color:#800000">Fehler in der Kontur</div>

<!-- Ergebnis tabelle -->
<div class="grp" style="left:15px;top:454px;width:450px;height:140px"></div>
<div class="t" style="left:26px;top:460px;font-size:10.2px;font-weight:bold;color:#111">Ergebnis Tabelle</div>
<div class="a" style="left:26px;top:475px;width:243px;height:109px;background:#b8b8b8;border-top:1px solid #a0a0a0;border-left:2px solid #a0a0a0;border-right:1px solid #e8e8e8;border-bottom:1px solid #e8e8e8"></div>
<div id="tbl" class="a" style="left:28px;top:476px;width:225px;height:107px;background:#f0f0f0"></div>
<div class="a" style="left:28px;top:491px;width:225px;height:3px;border-top:1px solid #8c8c8c;border-bottom:1px solid #8c8c8c"></div>
<div class="a" style="left:28px;top:509px;width:225px;height:1px;background:#8c8c8c"></div>
<div class="a" style="left:28px;top:525px;width:225px;height:1px;background:#8c8c8c"></div>
<div class="a" style="left:28px;top:540px;width:225px;height:1px;background:#8c8c8c"></div>
<div class="a" style="left:28px;top:556px;width:225px;height:1px;background:#8c8c8c"></div>
<div class="a" style="left:28px;top:571px;width:225px;height:1px;background:#8c8c8c"></div>
<div class="a" style="left:73px;top:476px;width:2px;height:107px;background:#9a9a9a"></div>
<div class="a" style="left:144px;top:476px;width:2px;height:107px;background:#9a9a9a"></div>
<div class="t" style="left:32px;top:479px;font-size:10.5px;color:#111">Länge</div>
<div class="t" style="left:78px;top:479px;font-size:10.5px;color:#111">Weite</div>
<div class="t" style="left:150px;top:479px;font-size:10.5px;color:#111">Größe</div>
<div class="t" style="left:33px;top:497px;font-size:10.5px;color:#111">19</div>
<div class="t" style="left:79px;top:497px;font-size:10.5px;color:#111">9</div>
<div class="t" style="left:150px;top:497px;font-size:10.5px;color:#111">155</div>
<div class="a" style="left:253px;top:476px;width:15px;height:107px;background:#b4b4b4;border-left:1px solid #9a9a9a"></div>
<div class="a" style="left:253px;top:476px;width:14px;height:15px;background:linear-gradient(#dadada,#c8c8c8);border:1px solid #a8a8a8;border-top-color:#e8e8e8;border-left-color:#e8e8e8"></div>
<div class="a" style="left:256px;top:480px;width:0;height:0;border-left:4px solid transparent;border-right:4px solid transparent;border-bottom:6px solid #777"></div>
<div class="a" style="left:253px;top:568px;width:14px;height:15px;background:linear-gradient(#dadada,#c8c8c8);border:1px solid #a8a8a8;border-top-color:#e8e8e8;border-left-color:#e8e8e8"></div>
<div class="a" style="left:256px;top:572px;width:0;height:0;border-left:4px solid transparent;border-right:4px solid transparent;border-top:6px solid #777"></div>

<!-- LEDs -->
<div class="t" style="left:355px;top:492px;font-size:10.1px;font-weight:bold;color:#111">Ergebnis Teilesuche</div>
<div class="a" style="left:351px;top:502px;width:105px;height:34px;border:1px solid #f4f4f4;background:#e8e8e8"></div>
<div class="a" style="left:352px;top:503px;width:103px;height:32px;background:radial-gradient(ellipse 26px 7px at 28px 8px,rgba(190,255,170,.8) 0,rgba(150,255,120,0) 100%),radial-gradient(ellipse 40px 14px at 100% 100%,rgba(30,110,10,.55) 0,rgba(30,110,10,0) 100%),linear-gradient(180deg,#66f62a 0,#5cf21c 50%,#52e418 78%,#3cb814 100%)"></div>
<div class="t" style="left:371px;top:543px;font-size:10.1px;font-weight:bold;color:#111">Ergebnis Tool</div>
<div class="a" style="left:351px;top:554px;width:105px;height:33px;border:1px solid #f4f4f4;background:#e8e8e8"></div>
<div class="a" style="left:352px;top:555px;width:103px;height:31px;background:radial-gradient(ellipse 26px 7px at 28px 8px,rgba(255,170,170,.8) 0,rgba(255,120,120,0) 100%),radial-gradient(ellipse 40px 14px at 100% 100%,rgba(120,0,0,.55) 0,rgba(120,0,0,0) 100%),linear-gradient(180deg,#ff2020 0,#ff1010 50%,#f40808 78%,#c80000 100%)"></div>

<!-- buttons panel -->
<div class="grp" style="left:476px;top:454px;width:356px;height:140px"></div>
<div class="btn" style="left:488px;top:505px;width:108px;height:37px"><span style="left:0;width:106px;text-align:center;top:5px;line-height:12.5px">Referenzbild<br>tauschen</span></div>
<div class="btn" style="left:601px;top:465px;width:108px;height:36px"><span style="left:0;width:106px;text-align:center;top:11px">Neues Bild (F5)</span></div>
<div class="btn" style="left:713px;top:465px;width:109px;height:36px"><span style="left:0;width:107px;text-align:center;top:11px">Ref.-Bild laden (F4)</span></div>
<div class="btn" style="left:601px;top:506px;width:108px;height:36px"><span style="left:0;width:106px;text-align:center;top:11px;letter-spacing:3.2px;padding-left:3px">LIVE</span></div>
<div class="btn" style="left:713px;top:506px;width:109px;height:36px"><span style="left:0;width:107px;text-align:center;top:11px">Licht einstellen</span></div>
<div class="btn" style="left:601px;top:547px;width:108px;height:36px"><span style="left:60px;top:13px">OK</span></div>
<div class="btn" style="left:713px;top:547px;width:109px;height:36px"><span style="left:43px;top:13px">Abbrechen</span></div>
<svg class="a" style="left:602px;top:550px" width="30" height="30" viewBox="602 550 30 30">
<defs><linearGradient id="cg" x1="0" y1="1" x2="1" y2="0"><stop offset="0" stop-color="#b8dc70"/><stop offset="0.5" stop-color="#8ccc58"/><stop offset="1" stop-color="#4aa040"/></linearGradient></defs>
<path d="M607.5,563.5 L613.5,571.5 L625,558" fill="none" stroke="url(#cg)" stroke-width="4" stroke-linecap="round" stroke-linejoin="round" opacity="0.9"/>
<path d="M608.5,565 L611,568" stroke="#3a8a30" stroke-width="2" stroke-linecap="round" opacity="0.7"/>
<rect x="609" y="573" width="12" height="1" fill="#c0c8c0" opacity="0.6"/>
</svg>
<svg class="a" style="left:720px;top:557px" width="18" height="17" viewBox="0 0 18 17">
<rect x="0.5" y="0.5" width="17" height="16" rx="1.5" fill="#f4e4e4" stroke="#e8c8c8"/>
<rect x="2.5" y="2.5" width="13" height="12" rx="1" fill="#c81a26"/>
<path d="M6,5.5 L12,11.5 M12,5.5 L6,11.5" stroke="#fbe0e6" stroke-width="2.2" stroke-linecap="round"/>
</svg>

<!-- status bar -->
<div class="a" style="left:15px;top:608px;width:818px;height:19px;background:#3398f0;border-top:1px solid #8aa0b0;border-left:1px solid #a0b8c8"></div>
<div class="a" style="left:832px;top:608px;width:2px;height:19px;background:#e8f0f4"></div>
<div class="a" style="left:15px;top:626px;width:819px;height:2px;background:#e4eef4"></div>
<div class="t" style="left:20px;top:613px;font-size:10.5px;color:#0a1a5a">Gefundene- und Referenzkontur stimmen nicht überein</div>
</body></html>
